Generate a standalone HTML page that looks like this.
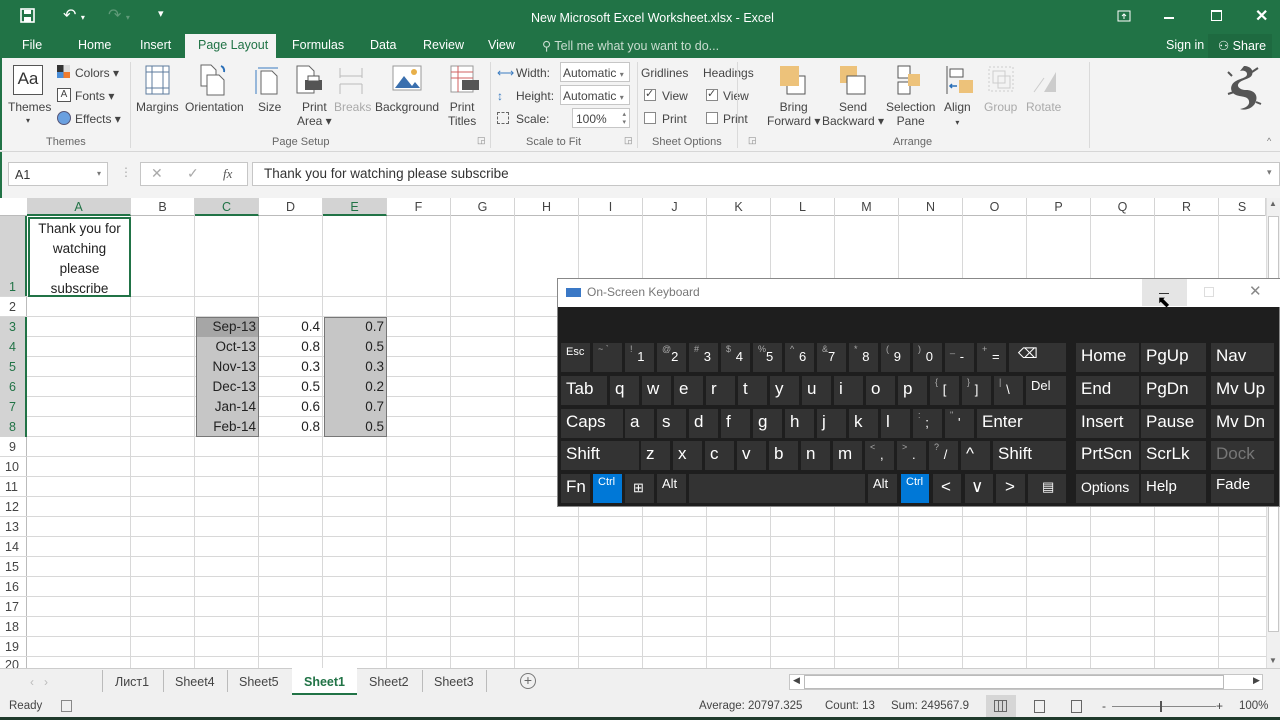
<!DOCTYPE html>
<html><head><meta charset="utf-8"><style>
*{margin:0;padding:0;box-sizing:border-box}
body{width:1280px;height:720px;overflow:hidden;position:relative;background:#fff;font-family:"Liberation Sans",sans-serif;font-size:12px;color:#444}
.a{position:absolute}
.t{position:absolute;white-space:nowrap}
.tab{position:absolute;top:38px;color:#fff;font-size:12.5px}
.rl{position:absolute;font-size:12px;color:#444;white-space:nowrap;text-align:center}
.gl{position:absolute;top:136px;font-size:11px;color:#666}
.ch{position:absolute;top:198px;height:18px;font-size:12.5px;color:#444;text-align:center;line-height:18px;border-right:1px solid #d4d4d4}
.rh{position:absolute;left:0;width:27px;font-size:12.5px;color:#444;padding-left:9px}
.cell{position:absolute;height:20px;line-height:20px;font-size:13.5px;color:#222;text-align:right;padding-right:3px}
.k{position:absolute;background:#333;color:#fff;font-size:17px;height:29px;line-height:26px;padding-left:5px;white-space:nowrap}
.k small{font-size:9px;color:#aaa;vertical-align:top;line-height:12px}
.k .s{font-size:13px;color:#fff}
.blue{background:#0078d7!important}
.cb{position:absolute;width:12px;height:12px;border:1px solid #888;background:#fff}
</style></head><body>
<!-- title bar -->
<div class="a" style="left:0;top:0;width:1280px;height:58px;background:#217346"></div>
<svg class="a" style="left:20px;top:8px" width="18" height="16"><rect x="1" y="1" width="13" height="13" fill="none" stroke="#fff" stroke-width="1.6"/><rect x="4" y="2" width="7" height="4" fill="#fff"/><rect x="4" y="9" width="7" height="5" fill="#fff"/></svg>
<div class="t" style="left:63px;top:5px;color:#fff;font-size:16px">↶ <span style="font-size:8px">▾</span></div>
<div class="t" style="left:108px;top:5px;color:#5f9a78;font-size:16px">↷ <span style="font-size:8px">▾</span></div>
<div class="t" style="left:158px;top:7px;color:#fff;font-size:11px">▾</div>
<div class="t" style="left:531px;top:11px;color:#fff;font-size:12.5px">New Microsoft Excel Worksheet.xlsx - Excel</div>
<svg class="a" style="left:1117px;top:10px" width="14" height="12"><rect x="1" y="1" width="12" height="10" fill="none" stroke="#fff"/><path d="M7 9V4M5 6l2-2 2 2" stroke="#fff" fill="none"/></svg>
<div class="a" style="left:1164px;top:17px;width:10px;height:2px;background:#fff"></div>
<div class="a" style="left:1211px;top:10px;width:11px;height:11px;border:1.5px solid #fff;border-top-width:2.5px"></div>
<div class="t" style="left:1255px;top:6px;color:#fff;font-size:16px;font-weight:bold">✕</div>
<!-- tabs -->
<div class="tab" style="left:22px">File</div>
<div class="tab" style="left:78px">Home</div>
<div class="tab" style="left:140px">Insert</div>
<div class="a" style="left:185px;top:34px;width:91px;height:24px;background:#f3f3f3"></div>
<div class="tab" style="left:198px;color:#217346">Page Layout</div>
<div class="tab" style="left:292px">Formulas</div>
<div class="tab" style="left:370px">Data</div>
<div class="tab" style="left:423px">Review</div>
<div class="tab" style="left:488px">View</div>
<div class="tab" style="left:542px;color:#c8dccf">⚲ Tell me what you want to do...</div>
<div class="tab" style="left:1166px">Sign in</div>
<div class="a" style="left:1208px;top:34px;width:64px;height:24px;background:#1e6a40"></div>
<div class="tab" style="left:1218px">⚇ Share</div>
<!-- ribbon -->
<div class="a" style="left:0;top:58px;width:1280px;height:94px;background:#f3f3f3;border-bottom:1px solid #d6d6d6"></div>
<div class="a" style="left:0;top:58px;width:2px;height:92px;background:#217346"></div>
<div class="a" style="left:13px;top:65px;width:30px;height:30px;border:1px solid #555;background:#fff;font-size:17px;color:#333;text-align:center;line-height:26px">Aa</div>
<div class="rl" style="left:8px;top:100px">Themes</div>
<div class="rl" style="left:26px;top:116px;font-size:8px">▾</div>
<div class="a" style="left:57px;top:65px;width:13px;height:13px;background:linear-gradient(90deg,#333 50%,#ddd 50%)"></div>
<div class="a" style="left:57px;top:72px;width:13px;height:6px;background:linear-gradient(90deg,#4a8ed8 50%,#ef7b2e 50%)"></div>
<div class="t" style="left:75px;top:66px">Colors ▾</div>
<div class="a" style="left:57px;top:88px;width:14px;height:14px;border:1px solid #555;background:#fff;font-size:10px;text-align:center;line-height:12px">A</div>
<div class="t" style="left:75px;top:89px">Fonts ▾</div>
<div class="a" style="left:57px;top:111px;width:14px;height:14px;border-radius:50%;background:#6aa0e0;border:1px solid #557"></div>
<div class="t" style="left:75px;top:112px">Effects ▾</div>
<div class="gl" style="left:46px">Themes</div>
<div class="a" style="left:130px;top:62px;width:1px;height:86px;background:#dadada"></div>
<svg class="a" style="left:144px;top:64px" width="28" height="32"><rect x="2" y="2" width="23" height="28" fill="#fff" stroke="#5d7b9d"/><path d="M2 8H25M2 24H25M8 2V30M19 2V30" stroke="#5d7b9d"/></svg>
<div class="rl" style="left:136px;top:100px">Margins</div>
<svg class="a" style="left:198px;top:63px" width="32" height="34"><path d="M3 2h10l5 5v16H3z" fill="#fff" stroke="#666"/><path d="M9 12h12l5 5v15H9z" fill="#fff" stroke="#666"/><path d="M23 3a5 5 0 0 1 3 6" stroke="#2a6fb8" fill="none" stroke-width="2"/></svg>
<div class="rl" style="left:185px;top:100px">Orientation</div>
<svg class="a" style="left:255px;top:64px" width="26" height="32"><path d="M3 4h20M1 6v24" stroke="#3a7bc0"/><path d="M6 7h11l5 5v18H6z" fill="#fff" stroke="#666"/></svg>
<div class="rl" style="left:258px;top:100px">Size</div>
<svg class="a" style="left:295px;top:64px" width="30" height="32"><path d="M2 2h12l5 5v22H2z" fill="#fff" stroke="#666"/><rect x="10" y="16" width="17" height="10" fill="#555"/><rect x="13" y="12" width="11" height="5" fill="#fff" stroke="#555"/></svg>
<div class="rl" style="left:297px;top:100px">Print<br>Area ▾</div>
<svg class="a" style="left:336px;top:64px" width="30" height="32"><path d="M4 4v10M26 4v10M4 20v10M26 20v10M4 12h22M4 20h22" stroke="#bbb"/></svg>
<div class="rl" style="left:334px;top:100px;color:#aaa">Breaks</div>
<svg class="a" style="left:392px;top:64px" width="30" height="30"><rect x="1" y="2" width="28" height="24" fill="#fff" stroke="#999"/><path d="M3 24l9-12 8 10 3-4 5 6z" fill="#3a6fae"/><circle cx="22" cy="8" r="3" fill="#e8b04a"/></svg>
<div class="rl" style="left:375px;top:100px">Background</div>
<svg class="a" style="left:450px;top:64px" width="30" height="32"><rect x="1" y="2" width="22" height="26" fill="#fff" stroke="#999"/><path d="M1 8h22M1 14h22M8 2v26" stroke="#d06060"/><rect x="12" y="16" width="17" height="10" fill="#555"/></svg>
<div class="rl" style="left:448px;top:100px">Print<br>Titles</div>
<div class="gl" style="left:272px">Page Setup</div>
<div class="t" style="left:477px;top:135px;font-size:9px;color:#888">◲</div>
<div class="a" style="left:490px;top:62px;width:1px;height:86px;background:#dadada"></div>
<div class="t" style="left:497px;top:66px;color:#3a7bc0">⟷</div><div class="t" style="left:516px;top:66px">Width:</div>
<div class="a" style="left:560px;top:62px;width:70px;height:20px;border:1px solid #c6c6c6;background:#fff;padding:3px 2px">Automatic <span style="font-size:8px;color:#777">▾</span></div>
<div class="t" style="left:497px;top:89px;color:#3a7bc0">↕</div><div class="t" style="left:516px;top:89px">Height:</div>
<div class="a" style="left:560px;top:85px;width:70px;height:20px;border:1px solid #c6c6c6;background:#fff;padding:3px 2px">Automatic <span style="font-size:8px;color:#777">▾</span></div>
<div class="a" style="left:497px;top:112px;width:12px;height:12px;border:1px dashed #666"></div><div class="t" style="left:516px;top:112px">Scale:</div>
<div class="a" style="left:572px;top:108px;width:58px;height:20px;border:1px solid #c6c6c6;background:#fff;padding:3px 3px">100% <span style="font-size:7px;color:#777;position:absolute;right:3px;top:1px">▴<br>▾</span></div>
<div class="gl" style="left:526px">Scale to Fit</div>
<div class="t" style="left:624px;top:135px;font-size:9px;color:#888">◲</div>
<div class="a" style="left:637px;top:62px;width:1px;height:86px;background:#dadada"></div>
<div class="t" style="left:641px;top:66px">Gridlines</div>
<div class="cb" style="left:644px;top:89px"></div><div class="t" style="left:645px;top:87px;font-size:11px">✓</div><div class="t" style="left:662px;top:89px">View</div>
<div class="cb" style="left:644px;top:112px"></div><div class="t" style="left:662px;top:112px">Print</div>
<div class="t" style="left:703px;top:66px">Headings</div>
<div class="cb" style="left:706px;top:89px"></div><div class="t" style="left:707px;top:87px;font-size:11px">✓</div><div class="t" style="left:723px;top:89px">View</div>
<div class="cb" style="left:706px;top:112px"></div><div class="t" style="left:723px;top:112px">Print</div>
<div class="gl" style="left:652px">Sheet Options</div>
<div class="t" style="left:748px;top:135px;font-size:9px;color:#888">◲</div>
<div class="a" style="left:737px;top:62px;width:1px;height:86px;background:#dadada"></div>
<svg class="a" style="left:778px;top:64px" width="30" height="32"><rect x="9" y="12" width="18" height="18" fill="#fff" stroke="#555"/><rect x="2" y="2" width="19" height="20" fill="#edc27a"/></svg>
<div class="rl" style="left:767px;top:100px">Bring<br>Forward ▾</div>
<svg class="a" style="left:838px;top:64px" width="30" height="32"><rect x="2" y="2" width="17" height="17" fill="#edc27a"/><rect x="9" y="12" width="18" height="18" fill="#fff" stroke="#555"/></svg>
<div class="rl" style="left:822px;top:100px">Send<br>Backward ▾</div>
<svg class="a" style="left:896px;top:64px" width="30" height="32"><rect x="2" y="2" width="12" height="12" fill="#fff" stroke="#555"/><rect x="2" y="18" width="12" height="12" fill="#fff" stroke="#555"/><rect x="12" y="10" width="12" height="12" fill="#edc27a"/></svg>
<div class="rl" style="left:886px;top:100px">Selection<br>Pane</div>
<svg class="a" style="left:945px;top:64px" width="30" height="32"><path d="M2 2v28" stroke="#555"/><rect x="5" y="5" width="13" height="8" fill="#fff" stroke="#555"/><rect x="14" y="16" width="14" height="13" fill="#edc27a"/><path d="M12 22H5M7 20l-2 2 2 2" stroke="#2a6fb8" fill="none" stroke-width="1.5"/></svg>
<div class="rl" style="left:944px;top:100px">Align<br><span style="font-size:8px">▾</span></div>
<svg class="a" style="left:986px;top:64px" width="30" height="30"><rect x="3" y="3" width="24" height="24" fill="none" stroke="#ccc" stroke-dasharray="2 2"/><rect x="7" y="7" width="12" height="12" fill="none" stroke="#ccc"/><rect x="12" y="12" width="12" height="12" fill="none" stroke="#ccc"/></svg>
<div class="rl" style="left:984px;top:100px;color:#aaa">Group</div>
<svg class="a" style="left:1030px;top:64px" width="30" height="30"><path d="M14 28L26 8v20z" fill="#ccc"/><path d="M4 28l10-14" stroke="#ccc"/></svg>
<div class="rl" style="left:1026px;top:100px;color:#aaa">Rotate</div>
<div class="gl" style="left:893px">Arrange</div>
<div class="a" style="top:62px;width:1px;height:86px;background:#dadada;left:1089px"></div>
<svg class="a" style="left:1222px;top:62px" width="42" height="60"><path d="M22 4c6 0 10 4 8 9-2 4-8 4-12 7-5 4 0 8 6 8 8 0 12 5 10 11-2 7-10 10-16 8 6-1 10-4 9-8-1-5-8-4-13-6-7-3-6-11 0-14 5-3 11-3 11-7 0-3-4-4-7-3z" fill="#555"/><path d="M10 14l-4-4M30 10l6-4M12 30l-6 2M34 40l5 2" stroke="#555" stroke-width="2"/></svg>
<div class="t" style="left:1267px;top:136px;font-size:9px;color:#777">^</div>
<!-- formula bar -->
<div class="a" style="left:0;top:152px;width:1280px;height:46px;background:#f3f3f3"></div>
<div class="a" style="left:0;top:152px;width:2px;height:516px;background:#217346"></div>
<div class="a" style="left:8px;top:162px;width:100px;height:24px;background:#fff;border:1px solid #c6c6c6;padding:5px 6px;font-size:12.5px;color:#333">A1<span style="position:absolute;right:6px;top:6px;font-size:8px;color:#777">▾</span></div>
<div class="t" style="left:120px;top:165px;color:#aaa">⋮</div>
<div class="a" style="left:140px;top:162px;width:108px;height:24px;background:#fff;border:1px solid #c6c6c6"></div>
<div class="t" style="left:151px;top:165px;color:#aaa;font-size:14px">✕</div>
<div class="t" style="left:187px;top:165px;color:#aaa;font-size:14px">✓</div>
<div class="t" style="left:223px;top:166px;color:#555;font-style:italic;font-family:'Liberation Serif',serif;font-size:13px">fx</div>
<div class="a" style="left:252px;top:162px;width:1028px;height:24px;background:#fff;border:1px solid #c6c6c6"></div>
<div class="t" style="left:264px;top:166px;color:#333;font-size:13.5px">Thank you for watching please subscribe</div>
<div class="t" style="left:1267px;top:167px;font-size:9px;color:#777">▾</div>
<!-- grid -->
<div class="a" style="left:0;top:198px;width:1266px;height:18px;background:#fff;border-bottom:1px solid #bbb"></div>
<div class="a" style="left:0;top:216px;width:27px;height:452px;background:#fff;border-right:1px solid #bbb"></div>
<div class="a" style="left:131px;top:216px;width:1135px;height:452px;background-image:repeating-linear-gradient(to right,transparent 0 63px,#d8d8d8 63px 64px);"></div>
<div class="a" style="left:27px;top:296px;width:1239px;height:372px;background-image:repeating-linear-gradient(to bottom,#d8d8d8 0 1px,transparent 1px 20px);"></div>
<div class="a" style="left:130px;top:216px;width:1px;height:452px;background:#d8d8d8"></div>
<div class="a" style="left:0;top:296px;width:27px;height:372px;background-image:repeating-linear-gradient(to bottom,#d8d8d8 0 1px,transparent 1px 20px);"></div>
<!-- col headers -->
<div class="ch" style="left:27px;width:104px;background:#d3d3d3;border-bottom:2px solid #217346;color:#217346">A</div>
<div class="ch" style="left:131px;width:64px">B</div>
<div class="ch" style="left:195px;width:64px;background:#d3d3d3;border-bottom:2px solid #217346;color:#217346">C</div>
<div class="ch" style="left:259px;width:64px">D</div>
<div class="ch" style="left:323px;width:64px;background:#d3d3d3;border-bottom:2px solid #217346;color:#217346">E</div>
<div class="ch" style="left:387px;width:64px">F</div><div class="ch" style="left:451px;width:64px">G</div><div class="ch" style="left:515px;width:64px">H</div><div class="ch" style="left:579px;width:64px">I</div><div class="ch" style="left:643px;width:64px">J</div><div class="ch" style="left:707px;width:64px">K</div><div class="ch" style="left:771px;width:64px">L</div><div class="ch" style="left:835px;width:64px">M</div><div class="ch" style="left:899px;width:64px">N</div><div class="ch" style="left:963px;width:64px">O</div><div class="ch" style="left:1027px;width:64px">P</div><div class="ch" style="left:1091px;width:64px">Q</div><div class="ch" style="left:1155px;width:64px">R</div><div class="ch" style="left:1219px;width:47px">S</div>
<!-- row headers -->
<div class="a" style="left:0;top:216px;width:27px;height:80px;background:#d3d3d3;border-right:2px solid #217346"></div>
<div class="a" style="left:0;top:317px;width:27px;height:120px;background:#d3d3d3;border-right:2px solid #217346"></div>
<div class="rh" style="top:280px;color:#217346">1</div>
<div class="rh" style="top:300px">2</div>
<div class="rh" style="top:320px;color:#217346">3</div><div class="rh" style="top:340px;color:#217346">4</div><div class="rh" style="top:360px;color:#217346">5</div><div class="rh" style="top:380px;color:#217346">6</div><div class="rh" style="top:400px;color:#217346">7</div><div class="rh" style="top:420px;color:#217346">8</div>
<div class="rh" style="top:440px">9</div><div class="rh" style="top:460px;padding-left:5px">10</div><div class="rh" style="top:480px;padding-left:5px">11</div><div class="rh" style="top:500px;padding-left:5px">12</div><div class="rh" style="top:520px;padding-left:5px">13</div><div class="rh" style="top:540px;padding-left:5px">14</div><div class="rh" style="top:560px;padding-left:5px">15</div><div class="rh" style="top:580px;padding-left:5px">16</div><div class="rh" style="top:600px;padding-left:5px">17</div><div class="rh" style="top:620px;padding-left:5px">18</div><div class="rh" style="top:640px;padding-left:5px">19</div><div class="rh" style="top:660px;padding-left:5px;height:8px;overflow:hidden;line-height:10px">20</div>
<!-- A1 -->
<div class="a" style="left:28px;top:217px;width:103px;height:80px;background:#fff;border:2px solid #217346;text-align:center;font-size:13.5px;line-height:20px;color:#222;padding-top:0">Thank you for<br>watching<br>please<br>subscribe</div>
<!-- selection blocks -->
<div class="a" style="left:196px;top:317px;width:63px;height:120px;background:#c6c6c6;border:1px solid #777"></div>
<div class="a" style="left:197px;top:318px;width:61px;height:19px;background:#a6a6a6"></div>
<div class="a" style="left:324px;top:317px;width:63px;height:120px;background:#c6c6c6;border:1px solid #777"></div>
<div class="cell" style="left:195px;top:317px;width:64px">Sep-13</div><div class="cell" style="left:195px;top:337px;width:64px">Oct-13</div><div class="cell" style="left:195px;top:357px;width:64px">Nov-13</div><div class="cell" style="left:195px;top:377px;width:64px">Dec-13</div><div class="cell" style="left:195px;top:397px;width:64px">Jan-14</div><div class="cell" style="left:195px;top:417px;width:64px">Feb-14</div>
<div class="cell" style="left:259px;top:317px;width:64px">0.4</div><div class="cell" style="left:259px;top:337px;width:64px">0.8</div><div class="cell" style="left:259px;top:357px;width:64px">0.3</div><div class="cell" style="left:259px;top:377px;width:64px">0.5</div><div class="cell" style="left:259px;top:397px;width:64px">0.6</div><div class="cell" style="left:259px;top:417px;width:64px">0.8</div>
<div class="cell" style="left:323px;top:317px;width:64px">0.7</div><div class="cell" style="left:323px;top:337px;width:64px">0.5</div><div class="cell" style="left:323px;top:357px;width:64px">0.3</div><div class="cell" style="left:323px;top:377px;width:64px">0.2</div><div class="cell" style="left:323px;top:397px;width:64px">0.7</div><div class="cell" style="left:323px;top:417px;width:64px">0.5</div>
<!-- vscroll -->
<div class="a" style="left:1266px;top:198px;width:14px;height:470px;background:#f0f0f0;border-left:1px solid #ddd"></div>
<div class="a" style="left:1268px;top:216px;width:11px;height:416px;background:#fff;border:1px solid #c6c6c6"></div>
<div class="t" style="left:1269px;top:199px;font-size:8px;color:#666">▲</div>
<div class="t" style="left:1269px;top:656px;font-size:8px;color:#666">▼</div>
<!-- sheet tabs -->
<div class="a" style="left:0;top:668px;width:1280px;height:27px;background:#f0f0f0;border-top:1px solid #ccc"></div>
<div class="t" style="left:30px;top:675px;color:#bbb">‹ &nbsp; ›</div>
<div class="a" style="left:102px;top:670px;width:1px;height:22px;background:#bbb"></div>
<div class="t" style="left:115px;top:675px;font-size:12.5px">Лист1</div>
<div class="a" style="left:163px;top:670px;width:1px;height:22px;background:#bbb"></div>
<div class="t" style="left:175px;top:675px;font-size:12.5px">Sheet4</div>
<div class="a" style="left:227px;top:670px;width:1px;height:22px;background:#bbb"></div>
<div class="t" style="left:239px;top:675px;font-size:12.5px">Sheet5</div>
<div class="a" style="left:292px;top:668px;width:65px;height:27px;background:#fff;border-bottom:2px solid #217346"></div>
<div class="t" style="left:304px;top:675px;font-size:12.5px;color:#217346;font-weight:bold">Sheet1</div>
<div class="t" style="left:369px;top:675px;font-size:12.5px">Sheet2</div>
<div class="a" style="left:422px;top:670px;width:1px;height:22px;background:#bbb"></div>
<div class="t" style="left:434px;top:675px;font-size:12.5px">Sheet3</div>
<div class="a" style="left:486px;top:670px;width:1px;height:22px;background:#bbb"></div>
<div class="a" style="left:520px;top:673px;width:16px;height:16px;border:1px solid #777;border-radius:50%;text-align:center;line-height:13px;color:#666;font-size:14px">+</div>
<div class="a" style="left:789px;top:674px;width:474px;height:16px;background:#fff;border:1px solid #c6c6c6"></div>
<div class="a" style="left:804px;top:675px;width:420px;height:14px;border:1px solid #bbb;background:#fff"></div>
<div class="t" style="left:793px;top:675px;font-size:9px">◀</div><div class="t" style="left:1253px;top:675px;font-size:9px">▶</div>
<!-- status -->
<div class="a" style="left:0;top:695px;width:1280px;height:25px;background:#f0f0f0"></div>
<div class="t" style="left:9px;top:700px;font-size:11.5px">Ready</div>
<div class="a" style="left:61px;top:700px;width:11px;height:12px;border:1px solid #888"></div>
<div class="t" style="left:699px;top:700px;font-size:11.5px">Average: 20797.325</div>
<div class="t" style="left:825px;top:700px;font-size:11.5px">Count: 13</div>
<div class="t" style="left:891px;top:700px;font-size:11.5px">Sum: 249567.9</div>
<div class="a" style="left:986px;top:695px;width:30px;height:23px;background:#d6d6d6"></div>
<div class="a" style="left:994px;top:700px;width:13px;height:12px;border:1px solid #666;background:repeating-linear-gradient(90deg,transparent 0 3px,#666 3px 4px)"></div>
<div class="a" style="left:1034px;top:700px;width:11px;height:13px;border:1px solid #666"></div>
<div class="a" style="left:1071px;top:700px;width:11px;height:13px;border:1px solid #666"></div>
<div class="t" style="left:1102px;top:699px">-</div>
<div class="a" style="left:1112px;top:706px;width:104px;height:1px;background:#888"></div>
<div class="a" style="left:1160px;top:701px;width:2px;height:11px;background:#555"></div>
<div class="t" style="left:1216px;top:699px">+</div>
<div class="t" style="left:1239px;top:700px;font-size:11.5px">100%</div>
<div class="a" style="left:0;top:717px;width:1280px;height:3px;background:#1f3a2c"></div>
<!-- OSK -->
<div class="a" style="left:557px;top:278px;width:723px;height:229px;background:#1e1e1e;border:1px solid #888"></div>
<div class="a" style="left:558px;top:279px;width:722px;height:28px;background:#fff"></div>
<div class="a" style="left:566px;top:288px;width:15px;height:9px;background:#3a78c6"></div>
<div class="t" style="left:587px;top:285px;font-size:12px;color:#777">On-Screen Keyboard</div>
<div class="a" style="left:1142px;top:279px;width:45px;height:27px;background:#e5e5e5"></div>
<div class="a" style="left:1159px;top:293px;width:10px;height:1px;background:#333"></div>
<div class="t" style="left:1157px;top:292px;font-size:16px;color:#000">⬉</div>
<div class="a" style="left:1204px;top:287px;width:10px;height:10px;border:1px solid #ddd"></div>
<div class="t" style="left:1249px;top:282px;font-size:15px;color:#888">✕</div>
<div class="k" style="left:561px;top:343px;width:29px;font-size:11px;line-height:18px">Esc</div>
<div class="k" style="left:593px;top:343px;width:29px"><small>~ `</small></div>
<div class="k" style="left:625px;top:343px;width:29px"><small>!</small> <span class="s">1</span></div>
<div class="k" style="left:657px;top:343px;width:29px"><small>@</small><span class="s">2</span></div>
<div class="k" style="left:689px;top:343px;width:29px"><small>#</small> <span class="s">3</span></div>
<div class="k" style="left:721px;top:343px;width:29px"><small>$</small> <span class="s">4</span></div>
<div class="k" style="left:753px;top:343px;width:29px"><small>%</small><span class="s">5</span></div>
<div class="k" style="left:785px;top:343px;width:29px"><small>^</small> <span class="s">6</span></div>
<div class="k" style="left:817px;top:343px;width:29px"><small>&amp;</small><span class="s">7</span></div>
<div class="k" style="left:849px;top:343px;width:29px"><small>*</small> <span class="s">8</span></div>
<div class="k" style="left:881px;top:343px;width:29px"><small>(</small> <span class="s">9</span></div>
<div class="k" style="left:913px;top:343px;width:29px"><small>)</small> <span class="s">0</span></div>
<div class="k" style="left:945px;top:343px;width:29px"><small>_</small> <span class="s">-</span></div>
<div class="k" style="left:977px;top:343px;width:29px"><small>+</small> <span class="s">=</span></div>
<div class="k" style="left:1009px;top:343px;width:57px;font-size:14px;line-height:20px">&nbsp;⌫</div>
<div class="k" style="left:561px;top:376px;width:46px">Tab</div>
<div class="k" style="left:610px;top:376px;width:29px">q</div><div class="k" style="left:642px;top:376px;width:29px">w</div><div class="k" style="left:674px;top:376px;width:29px">e</div><div class="k" style="left:706px;top:376px;width:29px">r</div><div class="k" style="left:738px;top:376px;width:29px">t</div><div class="k" style="left:770px;top:376px;width:29px">y</div><div class="k" style="left:802px;top:376px;width:29px">u</div><div class="k" style="left:834px;top:376px;width:29px">i</div><div class="k" style="left:866px;top:376px;width:29px">o</div><div class="k" style="left:898px;top:376px;width:29px">p</div>
<div class="k" style="left:930px;top:376px;width:29px"><small>{</small> <span class="s">[</span></div><div class="k" style="left:962px;top:376px;width:29px"><small>}</small> <span class="s">]</span></div><div class="k" style="left:994px;top:376px;width:29px"><small>|</small> <span class="s">\</span></div>
<div class="k" style="left:1026px;top:376px;width:40px;font-size:13px;line-height:20px">Del</div>
<div class="k" style="left:561px;top:409px;width:62px">Caps</div>
<div class="k" style="left:625px;top:409px;width:29px">a</div><div class="k" style="left:657px;top:409px;width:29px">s</div><div class="k" style="left:689px;top:409px;width:29px">d</div><div class="k" style="left:721px;top:409px;width:29px">f</div><div class="k" style="left:753px;top:409px;width:29px">g</div><div class="k" style="left:785px;top:409px;width:29px">h</div><div class="k" style="left:817px;top:409px;width:29px">j</div><div class="k" style="left:849px;top:409px;width:29px">k</div><div class="k" style="left:881px;top:409px;width:29px">l</div>
<div class="k" style="left:913px;top:409px;width:29px"><small>:</small> <span class="s">;</span></div><div class="k" style="left:945px;top:409px;width:29px"><small>"</small> <span class="s">'</span></div>
<div class="k" style="left:977px;top:409px;width:89px">Enter</div>
<div class="k" style="left:561px;top:441px;width:78px">Shift</div>
<div class="k" style="left:641px;top:441px;width:29px">z</div><div class="k" style="left:673px;top:441px;width:29px">x</div><div class="k" style="left:705px;top:441px;width:29px">c</div><div class="k" style="left:737px;top:441px;width:29px">v</div><div class="k" style="left:769px;top:441px;width:29px">b</div><div class="k" style="left:801px;top:441px;width:29px">n</div><div class="k" style="left:833px;top:441px;width:29px">m</div>
<div class="k" style="left:865px;top:441px;width:29px"><small>&lt;</small> <span class="s">,</span></div><div class="k" style="left:897px;top:441px;width:29px"><small>&gt;</small> <span class="s">.</span></div><div class="k" style="left:929px;top:441px;width:29px"><small>?</small> <span class="s">/</span></div>
<div class="k" style="left:961px;top:441px;width:29px">^</div>
<div class="k" style="left:993px;top:441px;width:73px">Shift</div>
<div class="k" style="left:561px;top:474px;width:29px">Fn</div>
<div class="k blue" style="left:593px;top:474px;width:29px;font-size:11px;line-height:16px">Ctrl</div>
<div class="k" style="left:625px;top:474px;width:29px;font-size:13px;line-height:28px;padding-left:8px">⊞</div>
<div class="k" style="left:657px;top:474px;width:29px;font-size:13px;line-height:20px">Alt</div>
<div class="k" style="left:689px;top:474px;width:176px"></div>
<div class="k" style="left:868px;top:474px;width:29px;font-size:13px;line-height:20px">Alt</div>
<div class="k blue" style="left:901px;top:474px;width:28px;font-size:11px;line-height:16px">Ctrl</div>
<div class="k" style="left:933px;top:474px;width:28px;padding-left:8px">&lt;</div>
<div class="k" style="left:965px;top:474px;width:28px;padding-left:6px">∨</div>
<div class="k" style="left:996px;top:474px;width:29px;padding-left:9px">&gt;</div>
<div class="k" style="left:1028px;top:474px;width:38px;font-size:13px;padding-left:14px">▤</div>
<div class="k" style="left:1076px;top:343px;width:63px">Home</div><div class="k" style="left:1141px;top:343px;width:65px">PgUp</div><div class="k" style="left:1211px;top:343px;width:63px">Nav</div>
<div class="k" style="left:1076px;top:376px;width:63px">End</div><div class="k" style="left:1141px;top:376px;width:65px">PgDn</div><div class="k" style="left:1211px;top:376px;width:63px">Mv Up</div>
<div class="k" style="left:1076px;top:409px;width:63px">Insert</div><div class="k" style="left:1141px;top:409px;width:65px">Pause</div><div class="k" style="left:1211px;top:409px;width:63px">Mv Dn</div>
<div class="k" style="left:1076px;top:441px;width:63px">PrtScn</div><div class="k" style="left:1141px;top:441px;width:65px">ScrLk</div><div class="k" style="left:1211px;top:441px;width:63px;color:#777">Dock</div>
<div class="k" style="left:1076px;top:474px;width:63px;font-size:14px">Options</div><div class="k" style="left:1141px;top:474px;width:65px;font-size:15px">Help</div><div class="k" style="left:1211px;top:474px;width:63px;font-size:15px;line-height:22px">Fade</div>
</body></html>
